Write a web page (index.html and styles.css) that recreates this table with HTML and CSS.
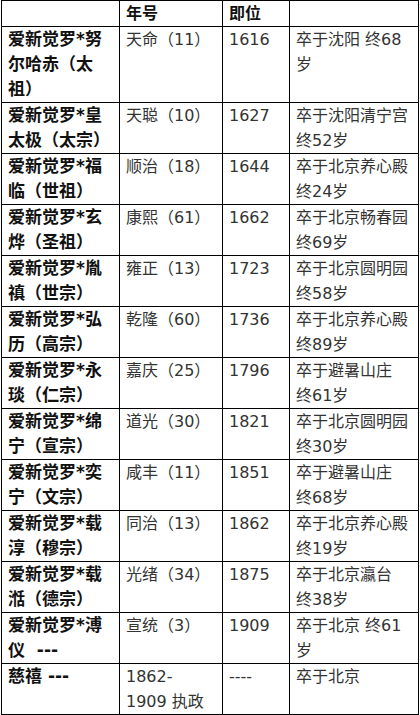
FILE: index.html
```html
<!DOCTYPE html>
<html lang="zh-CN">
<head>
<meta charset="utf-8">
<title>清朝皇帝</title>
<link rel="stylesheet" href="styles.css">
</head>
<body>
<table class="emperors">
  <colgroup>
    <col class="c-name">
    <col class="c-era">
    <col class="c-year">
    <col class="c-death">
  </colgroup>
  <thead>
    <tr>
      <th class="name"></th>
      <th class="era">年号</th>
      <th class="year">即位</th>
      <th class="death"></th>
    </tr>
  </thead>
  <tbody>
    <tr><td class="name">爱新觉罗*努尔哈赤（太祖）</td><td class="era">天命（11）</td><td class="year">1616</td><td class="death">卒于沈阳 终68岁</td></tr>
    <tr><td class="name">爱新觉罗*皇太极（太宗）</td><td class="era">天聪（10）</td><td class="year">1627</td><td class="death">卒于沈阳清宁宫 终52岁</td></tr>
    <tr><td class="name">爱新觉罗*福临（世祖）</td><td class="era">顺治（18）</td><td class="year">1644</td><td class="death">卒于北京养心殿 终24岁</td></tr>
    <tr><td class="name">爱新觉罗*玄烨（圣祖）</td><td class="era">康熙（61）</td><td class="year">1662</td><td class="death">卒于北京畅春园 终69岁</td></tr>
    <tr><td class="name">爱新觉罗*胤禛（世宗）</td><td class="era">雍正（13）</td><td class="year">1723</td><td class="death">卒于北京圆明园 终58岁</td></tr>
    <tr><td class="name">爱新觉罗*弘历（高宗）</td><td class="era">乾隆（60）</td><td class="year">1736</td><td class="death">卒于北京养心殿 终89岁</td></tr>
    <tr><td class="name">爱新觉罗*永琰（仁宗）</td><td class="era">嘉庆（25）</td><td class="year">1796</td><td class="death">卒于避暑山庄 终61岁</td></tr>
    <tr><td class="name">爱新觉罗*绵宁（宣宗）</td><td class="era">道光（30）</td><td class="year">1821</td><td class="death">卒于北京圆明园 终30岁</td></tr>
    <tr><td class="name">爱新觉罗*奕宁（文宗）</td><td class="era">咸丰（11）</td><td class="year">1851</td><td class="death">卒于避暑山庄 终68岁</td></tr>
    <tr><td class="name">爱新觉罗*载淳（穆宗）</td><td class="era">同治（13）</td><td class="year">1862</td><td class="death">卒于北京养心殿 终19岁</td></tr>
    <tr><td class="name">爱新觉罗*载湉（德宗）</td><td class="era">光绪（34）</td><td class="year">1875</td><td class="death">卒于北京瀛台 终38岁</td></tr>
    <tr><td class="name">爱新觉罗*溥仪&nbsp; ---</td><td class="era">宣统（3）</td><td class="year">1909</td><td class="death">卒于北京 终61岁</td></tr>
    <tr><td class="name">慈禧 ---</td><td class="era">1862-1909 执政</td><td class="year">----</td><td class="death">卒于北京</td></tr>
  </tbody>
</table>
</body>
</html>
```

FILE: styles.css
```css
html, body {
  margin: 0;
  padding: 0;
  background: #ffffff;
}

.emperors {
  margin: 0 0 0 1px;
  border-collapse: separate;
  border-spacing: 0;
  border-left: 1px solid #000;
  border-top: 1px solid #000;
  table-layout: fixed;
  width: 418px;
  font-family: "DejaVu Sans", "Noto Sans CJK SC", sans-serif;
  font-size: 16px;
  line-height: 25px;
  color: #333;
}

.c-name { width: 118px; }
.c-era { width: 103px; }
.c-year { width: 67px; }
.c-death { width: 129px; }

.emperors th,
.emperors td {
  border-right: 1px solid #000;
  border-bottom: 1px solid #000;
  padding: 0 6px;
  vertical-align: top;
  text-align: left;
  word-break: normal;
  line-break: strict;
}

.emperors th {
  font-weight: bold;
  color: #111;
  height: 25px;
}

.emperors td.name {
  font-weight: bold;
  font-size: 17px;
  color: #111;
}

.emperors td.era {
  padding-right: 10px;
}

.emperors td.death {
  padding-right: 8px;
}
```
